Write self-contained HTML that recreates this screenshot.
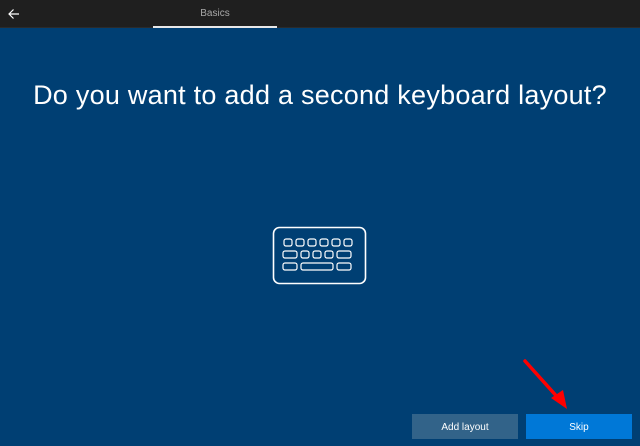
<!DOCTYPE html>
<html><head><style>
body{margin:0;width:640px;height:446px;background:#003f73;font-family:"Liberation Sans",sans-serif;position:relative;overflow:hidden}
.top{position:absolute;left:0;top:0;width:640px;height:27px;background:#1f1f1f;border-bottom:1px solid #2b2b2b}
.tab{position:absolute;left:153px;top:26px;width:124px;height:2px;background:#e8e8e8}
.basics{position:absolute;left:0;width:430px;top:8px;text-align:center;color:#a8a8a8;font-size:10px}
h1{position:absolute;top:80px;left:0;width:640px;margin:0;text-align:center;color:#fff;font-weight:normal;font-size:27px;letter-spacing:0.25px}
.btn{position:absolute;top:414px;height:25px;width:106px;color:#fff;font-size:10px;text-align:center;line-height:27px}
</style></head><body>
<div class="top"><div class="basics">Basics</div>
<svg style="position:absolute;left:7px;top:7px" width="14" height="14" viewBox="0 0 14 14"><path d="M12 7H2M6.5 2.5L2 7l4.5 4.5" stroke="#fff" stroke-width="1.2" fill="none"/></svg></div>
<div class="tab"></div>
<h1>Do you want to add a second keyboard layout?</h1>
<svg style="position:absolute;left:272px;top:226px" width="96" height="60" viewBox="0 0 96 60" fill="none" stroke="#fff" stroke-width="1.6">
<rect x="1.5" y="1.5" width="92" height="56" rx="6"/>
<g stroke-width="1.2">
<rect x="12" y="13" width="8" height="7" rx="2"/><rect x="24" y="13" width="8" height="7" rx="2"/><rect x="36" y="13" width="8" height="7" rx="2"/><rect x="48" y="13" width="8" height="7" rx="2"/><rect x="60" y="13" width="8" height="7" rx="2"/><rect x="72" y="13" width="8" height="7" rx="2"/>
<rect x="11" y="25" width="14" height="7" rx="2"/><rect x="29" y="25" width="8" height="7" rx="2"/><rect x="41" y="25" width="8" height="7" rx="2"/><rect x="53" y="25" width="8" height="7" rx="2"/><rect x="65" y="25" width="14" height="7" rx="2"/>
<rect x="11" y="37" width="14" height="7" rx="2"/><rect x="29" y="37" width="32" height="7" rx="2"/><rect x="65" y="37" width="14" height="7" rx="2"/>
</g></svg>
<div class="btn" style="left:412px;background:#326389">Add layout</div>
<div class="btn" style="left:526px;background:#0078d7">Skip</div>
<svg style="position:absolute;left:0;top:0" width="640" height="446"><path d="M525 361L560 400" stroke="#f00" stroke-width="3.5" stroke-linecap="round"/><path d="M551 398L567 409L563 390Z" fill="#f00"/></svg>
</body></html>
